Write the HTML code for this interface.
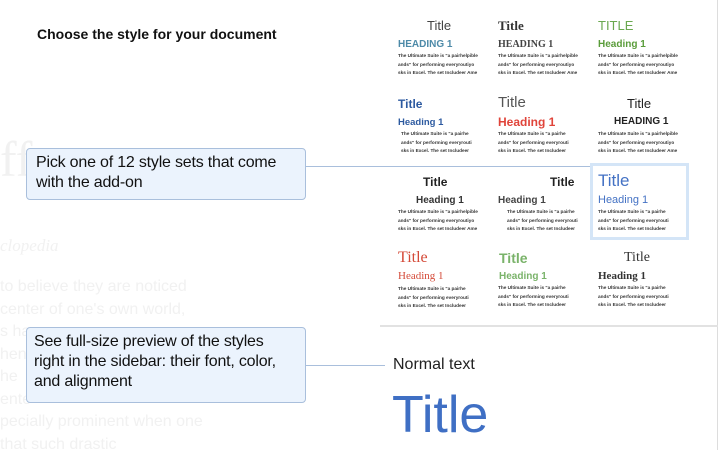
<!DOCTYPE html>
<html><head><meta charset="utf-8"><style>
*{margin:0;padding:0;box-sizing:border-box}
body{width:720px;height:450px;overflow:hidden;background:#fff;position:relative;font-family:"Liberation Sans",sans-serif}
.a{position:absolute;white-space:nowrap}
.bg{color:#f1f1f1;font-size:21px}
.panel{position:absolute;left:380px;top:0;width:338px;height:450px;background:#fff;border-right:1px solid #ddd}
.b{position:absolute;font-size:4.7px;line-height:8.5px;color:#333;font-weight:bold;width:86px;overflow:hidden;white-space:nowrap}
.call{position:absolute;left:26px;width:280px;background:#ebf3fd;border:1px solid #a9bfdc;border-radius:4px;font-size:16px;line-height:20px;color:#111;padding:4px 9px;white-space:nowrap;letter-spacing:-0.2px}
</style></head><body>
<div class="a bg" style="left:0;top:130px;font-size:50px;font-family:'Liberation Serif',serif">ff</div>
<div class="a bg" style="left:0;top:236px;font-style:italic;font-family:'Liberation Serif',serif;font-size:17px">clopedia</div>
<div class="a bg" style="left:0;top:276px;line-height:22.5px;font-size:16px">to believe they are noticed<br>center of one's own world,<br>s ha<br>hen<br>he<br>ente<br>pecially prominent when one<br>that such drastic</div>
<div class="a" style="left:37px;top:26px;font-size:14px;font-weight:bold;color:#111">Choose the style for your document</div>

<div class="panel"></div>
<div class="a" style="left:380px;top:325px;width:338px;height:2px;background:#e2e2e2"></div>
<div class="a" style="left:305px;top:166px;width:287px;height:1px;background:#a9bfdc"></div>
<div class="a" style="left:305px;top:365px;width:80px;height:1px;background:#a9bfdc"></div>
<div class="a" style="left:590px;top:163px;width:99px;height:77px;border:3px solid #d4e5f7"></div>

<div class="a" style="left:427px;top:18px;font-size:13px;color:#444">Title</div>
<div class="a" style="left:398px;top:39px;font-size:10px;font-weight:bold;color:#4d8aa8">HEADING 1</div>
<div class="a" style="left:498px;top:18px;font-size:13px;color:#333;font-weight:bold;font-family:'Liberation Serif',serif">Title</div>
<div class="a" style="left:498px;top:39px;font-size:10px;font-weight:bold;color:#444;font-family:'Liberation Serif',serif">HEADING 1</div>
<div class="a" style="left:598px;top:18px;font-size:13px;color:#6aa84f">TITLE</div>
<div class="a" style="left:598px;top:39px;font-size:10px;font-weight:bold;color:#5a9c3a">Heading 1</div>
<div class="a" style="left:398px;top:97px;font-size:12px;color:#2d5aa0;font-weight:bold">Title</div>
<div class="a" style="left:398px;top:117px;font-size:9.5px;color:#2d5aa0;font-weight:bold">Heading 1</div>
<div class="a" style="left:498px;top:94px;font-size:15px;color:#555">Title</div>
<div class="a" style="left:498px;top:115px;font-size:12px;color:#e0443a;font-weight:bold">Heading 1</div>
<div class="a" style="left:627px;top:96px;font-size:13px;color:#222">Title</div>
<div class="a" style="left:614px;top:116px;font-size:10px;color:#222;font-weight:bold">HEADING 1</div>
<div class="a" style="left:423px;top:175px;font-size:12px;color:#222;font-weight:bold">Title</div>
<div class="a" style="left:416px;top:195px;font-size:10px;color:#333;font-weight:bold">Heading 1</div>
<div class="a" style="left:550px;top:175px;font-size:12px;color:#222;font-weight:bold">Title</div>
<div class="a" style="left:498px;top:195px;font-size:10px;color:#444;font-weight:bold">Heading 1</div>
<div class="a" style="left:598px;top:171px;font-size:17px;color:#4472c4">Title</div>
<div class="a" style="left:598px;top:194px;font-size:11px;color:#4472c4">Heading 1</div>
<div class="a" style="left:398px;top:249px;font-size:16px;color:#d44a38;font-family:'Liberation Serif',serif">Title</div>
<div class="a" style="left:398px;top:270px;font-size:11px;color:#d44a38;font-family:'Liberation Serif',serif">Heading 1</div>
<div class="a" style="left:499px;top:250px;font-size:14px;color:#7ab36a;font-weight:bold">Title</div>
<div class="a" style="left:499px;top:271px;font-size:10px;color:#7ab36a;font-weight:bold">Heading 1</div>
<div class="a" style="left:624px;top:250px;font-size:14px;color:#333;font-family:'Liberation Serif',serif">Title</div>
<div class="a" style="left:598px;top:270px;font-size:11px;color:#333;font-weight:bold;font-family:'Liberation Serif',serif">Heading 1</div>

<div class="b" style="left:398px;top:52px">The Ultimate Suite is "a pairhelpible<br>ands" for performing everyroutiyo<br>sks in Excel. The set Includeer Ame</div>
<div class="b" style="left:498px;top:52px">The Ultimate Suite is "a pairhelpible<br>ands" for performing everyroutiyo<br>sks in Excel. The set Includeer Ame</div>
<div class="b" style="left:598px;top:52px">The Ultimate Suite is "a pairhelpible<br>ands" for performing everyroutiyo<br>sks in Excel. The set Includeer Ame</div>
<div class="b" style="left:401px;top:130px">The Ultimate Suite is "a pairhe<br>ands" for performing everyrouti<br>sks in Excel. The set Includeer</div>
<div class="b" style="left:498px;top:130px">The Ultimate Suite is "a pairhe<br>ands" for performing everyrouti<br>sks in Excel. The set Includeer</div>
<div class="b" style="left:598px;top:130px">The Ultimate Suite is "a pairhelpible<br>ands" for performing everyroutiyo<br>sks in Excel. The set Includeer Ame</div>
<div class="b" style="left:398px;top:208px">The Ultimate Suite is "a pairhelpible<br>ands" for performing everyroutiyo<br>sks in Excel. The set Includeer Ame</div>
<div class="b" style="left:507px;top:208px">The Ultimate Suite is "a pairhe<br>ands" for performing everyrouti<br>sks in Excel. The set Includeer</div>
<div class="b" style="left:598px;top:208px">The Ultimate Suite is "a pairhe<br>ands" for performing everyrouti<br>sks in Excel. The set Includeer</div>
<div class="b" style="left:398px;top:285px">The Ultimate Suite is "a pairhe<br>ands" for performing everyrouti<br>sks in Excel. The set Includeer</div>
<div class="b" style="left:498px;top:284px">The Ultimate Suite is "a pairhe<br>ands" for performing everyrouti<br>sks in Excel. The set Includeer</div>
<div class="b" style="left:598px;top:284px">The Ultimate Suite is "a pairhe<br>ands" for performing everyrouti<br>sks in Excel. The set Includeer</div>

<div class="a" style="left:393px;top:356px;font-size:16px;color:#222">Normal text</div>
<div class="a" style="left:392px;top:385px;font-size:52px;color:#3f6fc4;line-height:60px">Title</div>

<div class="call" style="top:148px;height:52px">Pick one of 12 style sets that come<br>with the add-on</div>
<div class="call" style="top:327px;height:76px;padding-left:7px">See full-size preview of the styles<br>right in the sidebar: their font, color,<br>and alignment</div>
</body></html>
